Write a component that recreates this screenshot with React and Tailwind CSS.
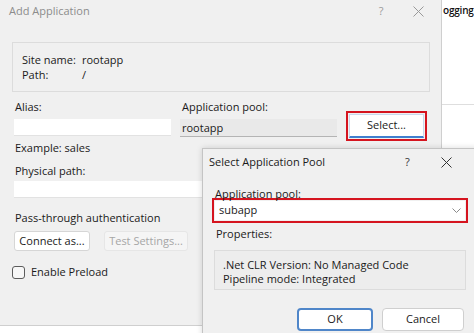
import React from 'react';

function CloseIcon({ color = '#999' }) {
  return (
    <svg width="11" height="11" viewBox="0 0 11 11">
      <path d="M0.5 0.5 L10.5 10.5 M10.5 0.5 L0.5 10.5" stroke={color} strokeWidth="1" fill="none" />
    </svg>
  );
}

function Chevron() {
  return (
    <svg width="9" height="5" viewBox="0 0 9 5">
      <path d="M0.5 0.5 L4.5 4.5 L8.5 0.5" stroke="#8a8a8a" strokeWidth="1" fill="none" />
    </svg>
  );
}

function SelectPoolDialog() {
  return (
    <div className="absolute left-[202px] top-[148px] w-[290px] h-[200px] bg-[#f0f0f0] border border-[#c4c4c4] shadow-[0_0_6px_rgba(0,0,0,0.15)]">
      {/* title bar */}
      <div className="flex items-center h-[26px] pl-[6px]">
        <span className="text-[#1a1a1a]">Select Application Pool</span>
        <span className="ml-[80px] text-[#333]">?</span>
        <span className="ml-[31px] mt-[1px]"><CloseIcon color="#333" /></span>
      </div>

      <div className="pl-[9px] w-[272px]">
        <div className="mt-[12px] pl-[3px] leading-[14px]">Application pool:</div>
        <div className="-mt-[3px] border-2 border-[#d5141f] w-[256px] h-[25px] p-[1px]">
          <div className="flex items-center justify-between h-full bg-white px-[4px]">
            <span>subapp</span>
            <Chevron />
          </div>
        </div>
        <div className="mt-[4px] pl-[4px] leading-[14px]">Properties:</div>
        <div className="mt-[9px] ml-[2px] w-[252px] h-[40px] border border-[#dcdcdc] bg-[#ededed] pl-[8px] pt-[7px] leading-[14px]">
          <div>.Net CLR Version: No Managed Code</div>
          <div>Pipeline mode: Integrated</div>
        </div>
        <div className="flex mt-[18px] ml-[85px] gap-[9px]">
          <button className="w-[76px] h-[23px] bg-white border-2 border-[#4f86c9] rounded-[4px] text-[#1a1a1a]">OK</button>
          <button className="w-[82px] h-[23px] bg-white border border-[#cfcfcf] rounded-[4px] text-[#1a1a1a]">Cancel</button>
        </div>
      </div>
    </div>
  );
}

export default function App() {
  return (
    <div
      className="relative w-[474px] h-[333px] overflow-hidden bg-white flex text-[11px] text-[#1a1a1a]"
      style={{ fontFamily: '"Open Sans", "Noto Sans", sans-serif' }}
    >
      {/* Add Application dialog */}
      <div className="w-[442px] h-[326px] bg-[#f0f0f0] border-r border-b border-[#cfcfcf] flex flex-col">
        <div className="flex items-center h-[22px] pl-[9px]">
          <span className="text-[#8c8c8c]">Add Application</span>
          <span className="ml-[289px] text-[#9a9a9a]">?</span>
          <span className="ml-[30px] mt-[1px]"><CloseIcon /></span>
        </div>

        <div className="px-[12px]">
          {/* site group */}
          <div className="mt-[20px] w-[418px] h-[50px] border border-[#dcdcdc] pl-[9px] pt-[9px] leading-[15px]">
            <div className="flex"><span className="w-[60px]">Site name:</span><span>rootapp</span></div>
            <div className="flex"><span className="w-[60px]">Path:</span><span>/</span></div>
          </div>

          {/* alias / app pool */}
          <div className="flex mt-[8px]">
            <div className="w-[157px] ml-[2px]">
              <div className="pl-[1px] leading-[14px]">Alias:</div>
              <div className="mt-[5px] h-[17px] bg-white border-b border-[#e2e2e2]" />
              <div className="mt-[5px] pl-[1px] leading-[14px]">Example: sales</div>
            </div>
            <div className="w-[157px] ml-[9px]">
              <div className="pl-[2px] leading-[14px]">Application pool:</div>
              <div className="mt-[5px] h-[18px] bg-[#e9e9e9] border-b border-[#b4b4b4] pl-[2px] leading-[17px]">rootapp</div>
            </div>
            <div className="ml-[9px] mt-[11px] w-[81px] h-[30px] border-2 border-[#d5141f] p-[1px]">
              <div className="h-full bg-white border border-[#c9d9ee] border-b-2 border-b-[#3f7fcf] flex items-center justify-center">Select...</div>
            </div>
          </div>

          {/* physical path */}
          <div className="mt-[9px] ml-[3px] leading-[14px]">Physical path:</div>
          <div className="mt-[3px] ml-[2px] w-[323px] h-[17px] bg-white border-b border-[#e2e2e2]" />

          {/* pass-through */}
          <div className="mt-[13px] ml-[3px] leading-[14px]">Pass-through authentication</div>
          <div className="flex mt-[6px] ml-[2px] gap-[14px]">
            <button className="w-[76px] h-[20px] bg-white border border-[#d6d6d6] rounded-[3px] leading-[18px]">Connect as...</button>
            <button className="w-[84px] h-[20px] bg-[#f5f5f5] border border-[#e6e6e6] rounded-[3px] text-[#a6a6a6] leading-[18px]">Test Settings...</button>
          </div>

          <div className="flex items-center mt-[13px] gap-[6px]">
            <span className="w-[13px] h-[13px] border border-[#5c5c5c] rounded-[3px] bg-[#f7f7f7]" />
            <span>Enable Preload</span>
          </div>
        </div>
      </div>

      {/* background window */}
      <div className="flex-1 flex flex-col">
        <div className="h-[20px] pl-[1px] font-semibold text-[10px] tracking-[-0.2px] leading-[20px] text-[#111] whitespace-nowrap">ogging</div>
        <div className="mt-[84px] border-t border-[#dedede]" />
      </div>

      <SelectPoolDialog />
    </div>
  );
}
